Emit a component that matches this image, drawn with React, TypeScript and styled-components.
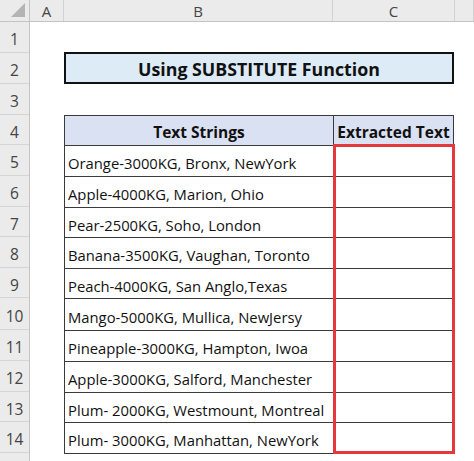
import React from "react";
import styled, { createGlobalStyle } from "styled-components";

const Global = createGlobalStyle`
  html, body { margin: 0; padding: 0; background: #ffffff; overflow: hidden; }
  #root { width: 474px; height: 461px; overflow: hidden; }
`;

const FONT = `"Open Sans", "Noto Sans", "Liberation Sans", sans-serif`;

const Sheet = styled.div`
  display: grid;
  grid-template-columns: 30px 1fr;
  grid-template-rows: 22px 1fr;
  width: 474px;
  height: 461px;
  overflow: hidden;
  font-family: ${FONT};
  background: #ffffff;
`;

const Corner = styled.div`
  background: #ebebeb;
  border-right: 1px solid #c4c4c4;
  border-bottom: 1px solid #c4c4c4;
  box-sizing: border-box;
  display: flex;
  align-items: flex-end;
  justify-content: flex-end;
  padding: 0 4px 4px 0;
`;

const ColumnBar = styled.div`
  display: flex;
  background: #ebebeb;
  border-bottom: 1px solid #c4c4c4;
  box-sizing: border-box;
`;

const ColHead = styled.div<{ $w?: number }>`
  ${(p) => (p.$w ? `width: ${p.$w}px; flex: none;` : `flex: 1;`)}
  box-sizing: border-box;
  border-right: 1px solid #d2d2d2;
  display: flex;
  align-items: center;
  justify-content: center;
  font-size: 15px;
  color: #444444;
  padding-top: 1px;
`;

const RowBar = styled.div`
  display: flex;
  flex-direction: column;
  background: #ebebeb;
  border-right: 1px solid #c4c4c4;
  box-sizing: border-box;
`;

const RowNum = styled.div<{ $h: number }>`
  height: ${(p) => p.$h}px;
  flex: none;
  box-sizing: border-box;
  border-bottom: 1px solid #d4d4d4;
  display: flex;
  align-items: center;
  justify-content: center;
  font-size: 15.5px;
  color: #444444;
  padding-top: 4px;
`;

const Canvas = styled.div`
  display: flex;
  flex-direction: column;
  padding-left: 34px;
`;

const Spacer = styled.div<{ $h: number }>`
  height: ${(p) => p.$h}px;
  flex: none;
`;

const TitleBox = styled.div`
  width: 390px;
  height: 32px;
  box-sizing: border-box;
  border: 2px solid #111111;
  background: #ddebf7;
  display: flex;
  align-items: center;
  justify-content: center;
  font-weight: 700;
  font-size: 17.8px;
  color: #111111;
  padding-top: 2px;
`;

const Table = styled.div`
  display: flex;
  align-items: flex-start;
`;

const ColumnB = styled.div`
  width: 269px;
  display: flex;
  flex-direction: column;
`;

const ColumnC = styled.div`
  width: 122px;
  display: flex;
  flex-direction: column;
`;

const HeadCell = styled.div<{ $last?: boolean }>`
  height: 30px;
  box-sizing: border-box;
  background: #d9e1f2;
  border-top: 1px solid #3a3a3a;
  border-left: 1px solid #3a3a3a;
  ${(p) => (p.$last ? "border-right: 1px solid #3a3a3a; margin-right: 1px;" : "")}
  display: flex;
  align-items: center;
  justify-content: center;
  font-weight: 700;
  font-size: 15.5px;
  color: #111111;
  padding-top: 3px;
  white-space: nowrap;
`;

const DataCell = styled.div<{ $h: number }>`
  height: ${(p) => p.$h}px;
  box-sizing: border-box;
  border-left: 1px solid #3a3a3a;
  border-top: 1px solid #3a3a3a;
  display: flex;
  align-items: center;
  padding: 4px 0 0 3px;
  font-size: 14.8px;
  color: #111111;
  white-space: nowrap;
`;

const BottomRule = styled.div`
  height: 1px;
  background: #3a3a3a;
`;

const RedBox = styled.div`
  box-sizing: border-box;
  border: 3px solid #e5383d;
  display: flex;
  flex-direction: column;
  margin-top: -1px;
`;

const EmptyCell = styled.div<{ $h: number; $first?: boolean }>`
  height: ${(p) => p.$h}px;
  box-sizing: border-box;
  ${(p) => (p.$first ? "" : "border-top: 1px solid #3a3a3a;")}
`;

const rowHeights = [31, 31, 31, 30, 31, 31, 30, 31, 30, 32, 31, 31, 30, 31, 31];
const dataHeights = [31, 31, 30, 31, 30, 32, 31, 31, 30, 31];

const strings = [
  "Orange-3000KG, Bronx, NewYork",
  "Apple-4000KG, Marion, Ohio",
  "Pear-2500KG, Soho, London",
  "Banana-3500KG, Vaughan, Toronto",
  "Peach-4000KG, San Anglo,Texas",
  "Mango-5000KG, Mullica, NewJersy",
  "Pineapple-3000KG, Hampton, Iwoa",
  "Apple-3000KG, Salford, Manchester",
  "Plum- 2000KG, Westmount, Montreal",
  "Plum- 3000KG, Manhattan, NewYork",
];

export default function App() {
  return (
    <>
      <Global />
      <Sheet>
        <Corner>
          <svg width="14" height="14" viewBox="0 0 14 14">
            <polygon points="14,0 14,14 0,14" fill="#b4b4b4" />
          </svg>
        </Corner>
        <ColumnBar>
          <ColHead $w={34}>A</ColHead>
          <ColHead $w={269}>B</ColHead>
          <ColHead $w={122}>C</ColHead>
          <ColHead />
        </ColumnBar>
        <RowBar>
          {rowHeights.map((h, i) => (
            <RowNum key={i} $h={h}>
              {i < 14 ? i + 1 : ""}
            </RowNum>
          ))}
        </RowBar>
        <Canvas>
          <Spacer $h={30} />
          <TitleBox>Using SUBSTITUTE Function</TitleBox>
          <Spacer $h={31} />
          <Table>
            <ColumnB>
              <HeadCell>Text Strings</HeadCell>
              {strings.map((s, i) => (
                <DataCell key={i} $h={dataHeights[i]}>
                  {s}
                </DataCell>
              ))}
              <BottomRule />
            </ColumnB>
            <ColumnC>
              <HeadCell $last>Extracted Text</HeadCell>
              <RedBox>
                {dataHeights.map((h, i) => (
                  <EmptyCell
                    key={i}
                    $first={i === 0}
                    $h={i === 0 || i === dataHeights.length - 1 ? h - 2 : h}
                  />
                ))}
              </RedBox>
            </ColumnC>
          </Table>
        </Canvas>
      </Sheet>
    </>
  );
}
